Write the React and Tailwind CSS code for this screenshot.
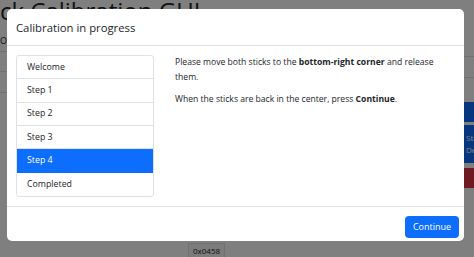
import React from "react";

const steps = ["Welcome", "Step 1", "Step 2", "Step 3", "Step 4", "Completed"];

export default function App() {
  return (
    <div
      className="relative w-[474px] h-[257px] overflow-hidden bg-white text-[#212529]"
      style={{ fontFamily: '"Open Sans", "Noto Sans", sans-serif' }}
    >
      {/* background page */}
      <div className="flex h-full">
        <div className="flex w-[464px] shrink-0 flex-col">
          <h1 className="ml-[-59px] mt-[-3px] whitespace-nowrap text-[24px] font-medium leading-[28px]">
            Joystick Calibration GUI
          </h1>
          <p className="mt-[10px] whitespace-nowrap text-[9px] leading-[12px]">Output device</p>
          <div className="mt-[4px] h-[21px] border-y border-[#dee2e6]"></div>
          <div className="h-[21px] border-b border-[#dee2e6]"></div>
          <div className="mt-auto flex h-[14px]">
            <div className="ml-[188px] flex w-[37px] items-center justify-center border-x border-t border-[#dee2e6] bg-[#f8f9fa] text-[8px]">
              0x0458
            </div>
          </div>
        </div>
        <div className="flex w-[60px] shrink-0 flex-col pt-[56px]">
          <div className="h-[22px] border-y border-[#dee2e6]"></div>
          <div className="mt-[24px] h-[20px] bg-[#0d6efd]"></div>
          <div className="mt-[3px] flex h-[38px] flex-col justify-center bg-[#0d6efd] pl-[2px] text-[8px] leading-[12px] text-white">
            <span>Start</span>
            <span>Device</span>
          </div>
          <div className="mt-[5px] h-[20px] bg-[#dc3545]"></div>
        </div>
      </div>

      {/* backdrop */}
      <div className="absolute inset-0 bg-black/50"></div>

      {/* modal */}
      <div className="absolute left-[7px] top-[9px] flex h-[232px] w-[457px] flex-col rounded-[5px] bg-white">
        <div className="flex h-[37px] shrink-0 items-center border-b border-[#dee2e6] px-[9px]">
          <h5 className="pt-[1px] text-[11.3px] font-medium leading-[16px]">Calibration in progress</h5>
        </div>
        <div className="flex h-[160px] shrink-0 p-[9px]">
          <div className="flex w-[138px] shrink-0 flex-col overflow-hidden rounded-[3px] border border-[#dee2e6]">
            {steps.map((s, i) => (
              <div
                key={s}
                className={
                  "flex h-[23.5px] items-center px-[10px] text-[8.8px] " +
                  (i < steps.length - 1 ? "border-b " : "") +
                  (i === 4
                    ? "border-[#0d6efd] bg-[#0d6efd] text-white"
                    : "border-[#dee2e6] text-[#212529]")
                }
              >
                {s}
              </div>
            ))}
          </div>
          <div className="ml-[21px] flex-1 text-[8.6px] leading-[14.6px]">
            <p className="mb-[8px]">
              Please move both sticks to the <b className="font-bold">bottom-right corner</b> and release them.
            </p>
            <p>
              When the sticks are back in the center, press <b className="font-bold">Continue</b>.
            </p>
          </div>
        </div>
        <div className="flex flex-1 items-start justify-end border-t border-[#dee2e6] pr-[5px] pt-[9px]">
          <button className="flex h-[22px] w-[54px] items-center justify-center rounded-[4px] bg-[#0d6efd] text-[9px] text-white">
            Continue
          </button>
        </div>
      </div>
    </div>
  );
}
